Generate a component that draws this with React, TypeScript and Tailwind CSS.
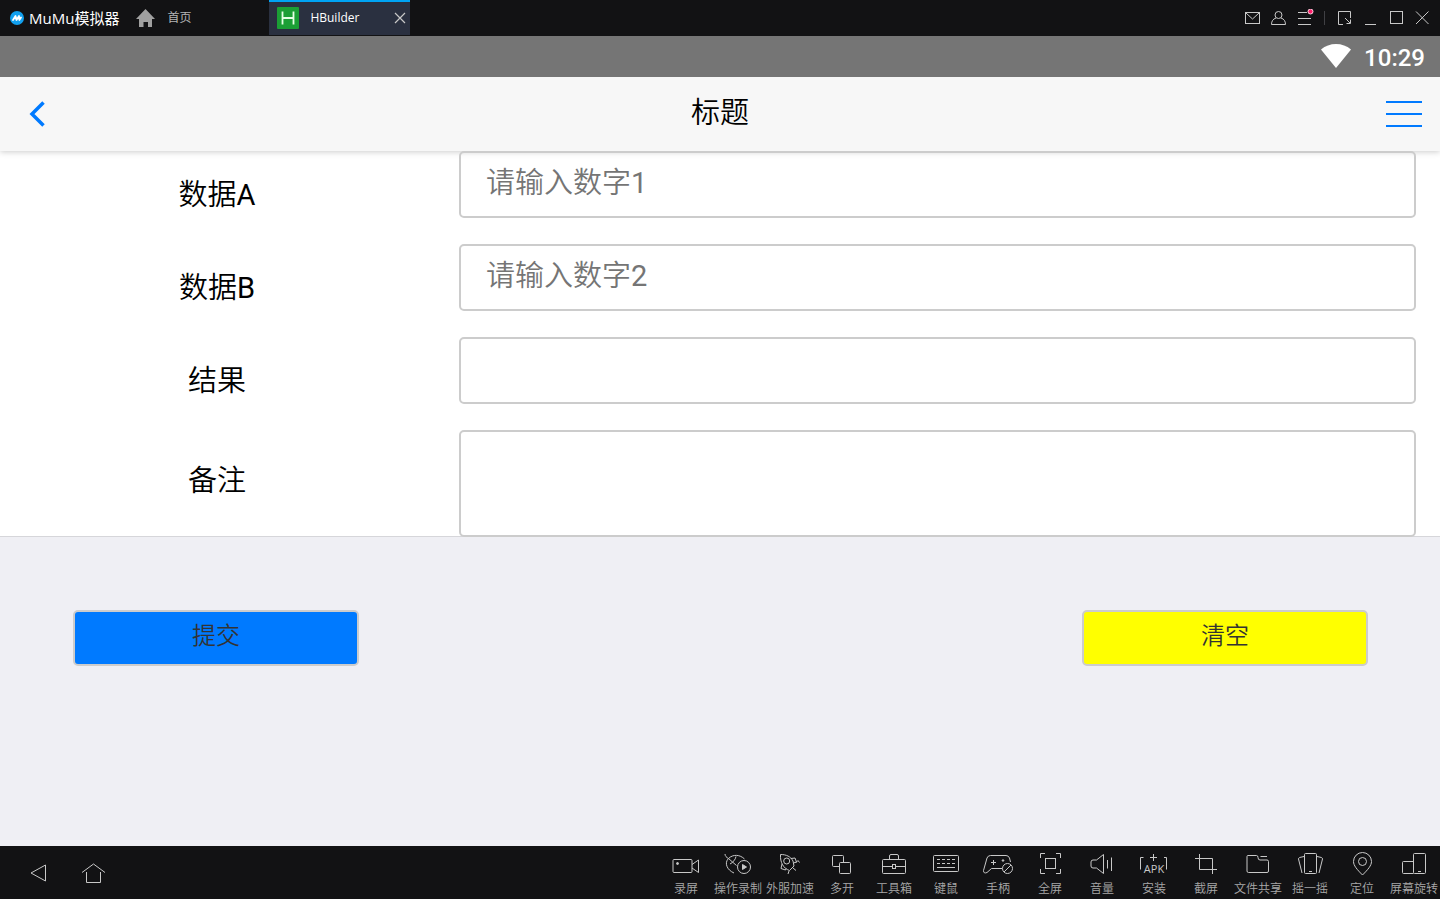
import { useState } from 'react';
import type { ReactNode } from 'react';

interface Tool {
  name: string;
  icon: ReactNode;
}

const tools: Tool[] = [
  {
    name: '录屏',
    icon: (
      <>
        <rect x="3" y="8.5" width="19" height="13" rx="1" />
        <path d="M22 13.5 28.5 9v12.5L22 17" />
        <circle cx="7.5" cy="12.5" r="1" fill="currentColor" />
      </>
    ),
  },
  {
    name: '操作录制',
    icon: (
      <>
        <path d="M3 3c0 2 1.500 3.500 3.500 4.500M12 22C5 19 2 12 6.500 7.500 11 3 18 3.500 22.500 8M6.500 7.500l8 7M14 5.500c-.5 3-3 6-6 7.500" />
        <circle cx="22" cy="16" r="6.500" fill="#121214" />
        <path d="m20.500 13.500 4 2.500-4 2.500z" fill="currentColor" />
      </>
    ),
  },
  {
    name: '外服加速',
    icon: (
      <>
        <path d="M6.500 3.500c6 0 10 2 12.500 6.500l1 5-4.500 4.500c-6-2-9.500-8-9-16z" />
        <circle cx="12.700" cy="10" r="3" />
        <path d="M17 7.500l4-.5 1.500 4-3 1M8 13l-1 4.500 4.500 1.500.5-1.500M19 17l3 2.500M15 20l-1 3M21.500 12l2.500-2.500 1.500 2" />
      </>
    ),
  },
  {
    name: '多开',
    icon: (
      <>
        <rect x="6.500" y="4.500" width="11" height="11" rx="1" />
        <rect x="13.500" y="11.500" width="11" height="11" rx="1" fill="#121214" />
      </>
    ),
  },
  {
    name: '工具箱',
    icon: (
      <>
        <rect x="4.500" y="8.500" width="23" height="14" rx="1" />
        <path d="M11.500 8V5q0-1.500 1.500-1.500h6q1.500 0 1.500 1.500v3M5 15.500h9.500M17.500 15.500H27" />
        <rect x="14.500" y="13.500" width="3" height="4" />
      </>
    ),
  },
  {
    name: '键鼠',
    icon: (
      <>
        <rect x="3.500" y="4.500" width="25" height="16" rx="1" />
        <path d="M7 8.500h19M7 12.500h19" strokeDasharray="3 2" />
        <path d="M7 16.500h18" />
      </>
    ),
  },
  {
    name: '手柄',
    icon: (
      <>
        <path d="M20 17.500H9.500L5 21.500q-3.500 1.500-3.500-2L5 7q1-2.500 3.500-2.500h15.500q2.500 0 3.500 2.500l1 4M11.500 9v5M9 11.500h5" />
        <circle cx="21" cy="9.500" r=".8" fill="currentColor" />
        <circle cx="25.500" cy="17.500" r="5" />
        <path d="m22 21 7-7" />
      </>
    ),
  },
  {
    name: '全屏',
    icon: (
      <>
        <rect x="11.500" y="7.500" width="10" height="10" />
        <path d="M6.500 7V2.500H11M22 2.500h4.500V7M26.500 18v4.500H22M11 22.500H6.500V18" />
      </>
    ),
  },
  {
    name: '音量',
    icon: (
      <path d="M17.500 3.500v19L10.500 17H7q-2 0-2-2v-4q0-2 2-2h3.500zM21.500 9v8.500M25.500 6.500v13.500" />
    ),
  },
  {
    name: '安装',
    icon: (
      <>
        <path d="M5.500 6.500h-3v12M26 6.500h2.500v12M15.500 3v7M12 6.500h7" />
        <text
          x="16"
          y="22"
          textAnchor="middle"
          fill="currentColor"
          stroke="none"
          className="font-['Open_Sans',sans-serif] text-[11px] font-normal"
        >
          APK
        </text>
      </>
    ),
  },
  {
    name: '截屏',
    icon: <path d="M9.500 3v15.500H27M5 7.500h17.500V23" />,
  },
  {
    name: '文件共享',
    icon: (
      <>
        <path d="M6 4.500h8.500q1.500 0 1.500 2 0 2.500 2 2.500h7q1.500 0 1.500 1.500v9.500q0 1.500-1.500 1.500H6.500q-1.500 0-1.500-1.500V5.500q0-1 1-1z" />
        <path d="M18.500 5.500H25" />
      </>
    ),
  },
  {
    name: '摇一摇',
    icon: (
      <>
        <rect x="10.500" y="2.500" width="12" height="20" rx="1" />
        <path d="M15 20.500h3M10 5.500l-4.500 1q-1 .5-1 1.500L8 22M23 5.500l4.500 1q1 .5 1 1.500L25 22" />
      </>
    ),
  },
  {
    name: '定位',
    icon: (
      <>
        <path d="M16.500 24C11 18.500 7.500 14.500 7.500 10.500a9 9 0 0 1 18 0c0 4-3.500 8-9 13.500z" />
        <circle cx="16.500" cy="10.500" r="4" />
      </>
    ),
  },
  {
    name: '屏幕旋转',
    icon: (
      <>
        <rect x="15.500" y="2.500" width="12" height="20" rx="1" />
        <path d="M15.500 10.500H5.500q-1 0-1 1v10q0 1 1 1h10M20 20.500h3" />
      </>
    ),
  },
];

interface WindowButtonProps {
  label: string;
  children: ReactNode;
}

const WindowButton = ({ label, children }: WindowButtonProps) => (
  <button type="button" aria-label={label} className="flex w-[26px] justify-center">
    <svg width="18" height="18" viewBox="0 0 18 18" fill="none" stroke="currentColor">
      {children}
    </svg>
  </button>
);

const TitleBar = () => (
  <div className="flex h-9 items-center bg-[#121214] font-['Open_Sans','Noto_Sans_CJK_SC',sans-serif] text-[#c8c8c8]">
    {/* Brand */}
    <svg className="ml-[10px]" width="14" height="14" viewBox="0 0 14 14">
      <circle cx="7" cy="7" r="7" fill="#12a0ee" />
      <path
        d="m3 9 2.500-4 1 4 2.500-4 .3 4 1.700-2.500"
        fill="none"
        stroke="#fff"
        strokeWidth="1.800"
        strokeLinecap="round"
        strokeLinejoin="round"
      />
    </svg>
    <span className="ml-[5px] text-[15px] text-white">MuMu模拟器</span>
    <button type="button" className="ml-[17px] flex items-center gap-3 text-xs text-[#b4b4b4]">
      <svg width="19" height="18" viewBox="0 0 19 18" fill="#a0a0a0">
        <path d="M9.500 0 19 10h-3v8h-4v-5H7.500v5H3v-8H0z" />
      </svg>
      首页
    </button>

    {/* Open tab */}
    <div className="mb-px ml-[78px] flex h-[35px] w-[141px] items-center border-t-2 border-[#00a4f5] bg-[#2a3040] pb-0.5 pl-2 pr-1">
      <svg width="22" height="22" viewBox="0 0 22 22">
        <rect width="22" height="22" rx="1" fill="#1b9f35" />
        <path d="M5.500 4.500v13M16.500 4.500v13M5.500 11h11" stroke="#e4ffe4" strokeWidth="1.800" />
      </svg>
      <span className="ml-[11px] flex-1 text-xs text-white">HBuilder</span>
      <button type="button" aria-label="关闭标签">
        <svg width="12" height="12" viewBox="0 0 12 12" stroke="#c8c8c8" strokeWidth="1.200">
          <path d="m1 1 10 10M11 1 1 11" />
        </svg>
      </button>
    </div>

    <div className="ml-auto mr-[5px] flex items-center">
      <WindowButton label="消息">
        <rect x="1.500" y="3.500" width="14" height="11" />
        <path d="m2 4 6.500 6L15 4" />
      </WindowButton>
      <WindowButton label="账号">
        <circle cx="8.500" cy="6" r="3.500" />
        <path d="M6 9C3 10 1.500 12 1.500 15.500h14C15.500 12 14 10 11 9" />
      </WindowButton>
      <WindowButton label="菜单">
        <path d="M2 3.500h9M2 9.500h13M2 15.500h13" />
        <circle cx="14.500" cy="2.500" r="2.500" fill="#ff1f6b" stroke="#ffd0e0" />
      </WindowButton>
      <span className="mx-[6px] h-[14px] w-px bg-[#404044]" />
      <WindowButton label="调整大小">
        <path d="M8 15.500H3.500v-13h12V9M10 9l5 5M15.500 10.500v4h-4" />
      </WindowButton>
      <WindowButton label="最小化">
        <path d="M4 15.500h11" />
      </WindowButton>
      <WindowButton label="最大化">
        <rect x="3.500" y="2.500" width="12" height="12" />
      </WindowButton>
      <WindowButton label="关闭">
        <path d="m3 2.500 12.500 12.500M15.500 2.500 3 15" />
      </WindowButton>
    </div>
  </div>
);

const StatusBar = () => (
  <div className="relative z-20 flex h-[41px] items-center justify-end gap-[13px] bg-[#757575] pr-[15px] text-white">
    <svg className="mb-0.5" width="30" height="24" viewBox="0 0 30 24" fill="#fff">
      <path d="M0 5.500Q6.500 0 15 0t15 5.500L15 24z" />
    </svg>
    <span className="pt-0.5 font-[Roboto,sans-serif] text-2xl font-medium">10:29</span>
  </div>
);

const inputClass =
  'block w-full rounded-[5px] border-2 border-[#ccc] bg-white px-[25px] text-[29px] outline-none placeholder:text-[#757575]';

interface FieldProps {
  id: string;
  label: string;
  children: ReactNode;
}

const Field = ({ id, label, children }: FieldProps) => (
  <div className="flex items-stretch">
    <label htmlFor={id} className="flex w-[30%] items-center justify-center pb-[3px] pl-[2px]">
      {label}
    </label>
    <div className="flex-1 pl-[27px] pr-6">{children}</div>
  </div>
);

const App = () => {
  const [values, setValues] = useState({ a: '', b: '', note: '' });

  const handleClear = () => setValues({ a: '', b: '', note: '' });

  return (
    <div className="flex min-h-screen flex-col bg-[#efeff4]">
      <TitleBar />
      <StatusBar />

      <div className="flex flex-1 flex-col font-[Roboto,'Noto_Sans_CJK_SC_DemiLight','Noto_Sans_CJK_SC',sans-serif]">
        <header className="relative z-10 flex h-[74px] items-center justify-between bg-[#f7f7f7] px-[18px] shadow-[0_1px_6px_#ccc]">
          <button type="button" aria-label="返回" className="w-9 pl-[11px]">
            <svg width="17" height="26" viewBox="0 0 17 26" fill="none" stroke="#007aff" strokeWidth="3.500">
              <path d="M14.500 1.500 3 13l11.500 11.500" />
            </svg>
          </button>
          <h1 className="text-[29px]">标题</h1>
          <button type="button" aria-label="菜单">
            <svg width="36" height="26" viewBox="0 0 36 26" stroke="#007aff" strokeWidth="2">
              <path d="M0 1h36M0 13h36M0 25h36" />
            </svg>
          </button>
        </header>

        <form className="flex flex-1 flex-col text-black" onSubmit={(e) => e.preventDefault()}>
          <div className="border-b border-[#d6d6da] bg-white text-[29px]">
            <Field id="data-a" label="数据A">
              <input
                id="data-a"
                type="text"
                placeholder="请输入数字1"
                value={values.a}
                onChange={(e) => setValues({ ...values, a: e.target.value })}
                className={`${inputClass} mb-[26px] h-[67px] pb-1`}
              />
            </Field>
            <Field id="data-b" label="数据B">
              <input
                id="data-b"
                type="text"
                placeholder="请输入数字2"
                value={values.b}
                onChange={(e) => setValues({ ...values, b: e.target.value })}
                className={`${inputClass} mb-[26px] h-[67px] pb-1`}
              />
            </Field>
            <Field id="result" label="结果">
              <input id="result" type="text" readOnly className={`${inputClass} mb-[26px] h-[67px] pb-1`} />
            </Field>
            <Field id="note" label="备注">
              <textarea
                id="note"
                value={values.note}
                onChange={(e) => setValues({ ...values, note: e.target.value })}
                className={`${inputClass} relative -mb-px h-[107px] resize-none`}
              />
            </Field>
          </div>

          <div className="flex justify-between pl-[73px] pr-[72px] pt-[73px] text-2xl text-[#333]">
            <button
              type="submit"
              className="h-14 w-[286px] rounded-[5px] border-2 border-[#ccc] bg-[#007aff] pb-1"
            >
              提交
            </button>
            <button
              type="button"
              onClick={handleClear}
              className="h-14 w-[286px] rounded-[5px] border-2 border-[#ccc] bg-[#ff0] pb-1"
            >
              清空
            </button>
          </div>
        </form>
      </div>

      {/* Emulator toolbar */}
      <footer className="flex h-[53px] items-center bg-[#121214] font-['Noto_Sans_CJK_SC',sans-serif] font-[350] text-[#c8c8c8]">
        <button type="button" aria-label="返回键" className="ml-[30px]">
          <svg width="17" height="18" viewBox="0 0 17 18" fill="none" stroke="currentColor">
            <path d="M15.500 1v16L1 9z" />
          </svg>
        </button>
        <button type="button" aria-label="主屏幕" className="ml-[34px]">
          <svg width="25" height="20" viewBox="0 0 25 20" fill="none" stroke="currentColor">
            <path d="M1 9.500 12.500 1 24 9.500M5.500 9v10.500h14V9" />
          </svg>
        </button>
        <div className="ml-auto flex">
          {tools.map((tool) => (
            <button key={tool.name} type="button" className="flex w-[52px] flex-col items-center pt-[5px]">
              <svg width="32" height="26" viewBox="0 0 32 26" fill="none" stroke="currentColor">
                {tool.icon}
              </svg>
              <span className="whitespace-nowrap text-xs leading-[22px] text-[#a8a8a8]">{tool.name}</span>
            </button>
          ))}
        </div>
      </footer>
    </div>
  );
};

export default App;
